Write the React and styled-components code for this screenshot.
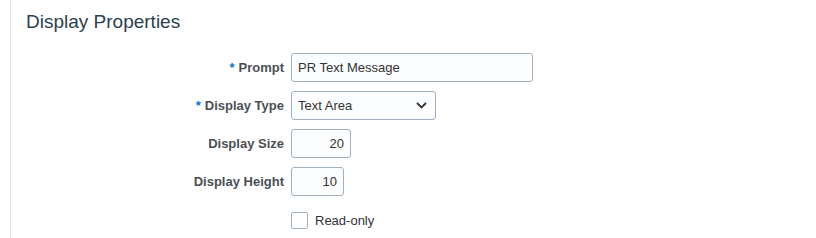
import React from "react";
import styled, { createGlobalStyle } from "styled-components";

const GlobalStyle = createGlobalStyle`
  html, body {
    margin: 0;
    padding: 0;
    background: #ffffff;
    font-family: "Liberation Sans", Arial, sans-serif;
  }
`;

const Page = styled.div`
  width: 816px;
  height: 238px;
  padding-left: 10px;
  box-sizing: border-box;
  overflow: hidden;
`;

const Panel = styled.section`
  border-left: 1px solid #dce3ea;
  height: 100%;
  padding: 10px 0 0 15px;
  box-sizing: border-box;
`;

const Title = styled.h2`
  margin: 0;
  font-size: 19px;
  font-weight: normal;
  color: #2b3f51;
  line-height: 24px;
`;

const Form = styled.div`
  display: grid;
  grid-template-columns: 258px auto;
  column-gap: 7px;
  row-gap: 9px;
  margin-top: 19px;
  align-items: center;
`;

const Label = styled.label`
  justify-self: end;
  font-size: 13px;
  font-weight: bold;
  color: #4b4f54;
  white-space: nowrap;
`;

const Star = styled.span`
  color: #0572ce;
  margin-right: 4px;
`;

const Field = styled.input`
  box-sizing: border-box;
  width: ${(p) => p.$w}px;
  height: 29px;
  border: 1px solid #a3b0bd;
  border-radius: 3px;
  background: #fcfdfe;
  font-family: "Liberation Sans", Arial, sans-serif;
  font-size: 13px;
  color: #333;
  padding: 0 6px;
  text-align: ${(p) => (p.$num ? "right" : "left")};
  outline: none;
`;

const SelectBox = styled.div`
  box-sizing: border-box;
  width: 145px;
  height: 29px;
  border: 1px solid #a3b0bd;
  border-radius: 3px;
  background: #fcfdfe;
  display: flex;
  align-items: center;
  justify-content: space-between;
  padding: 0 8px 0 6px;
  font-size: 13px;
  color: #333;
`;

const CheckRow = styled.div`
  grid-column: 2;
  display: flex;
  align-items: center;
  gap: 7px;
  margin-top: 7px;
  font-size: 13px;
  color: #333;
`;

const Box = styled.span`
  box-sizing: border-box;
  width: 17px;
  height: 17px;
  border: 1px solid #a3b0bd;
  border-radius: 2px;
  background: #fff;
`;

export default function App() {
  return (
    <>
      <GlobalStyle />
      <Page>
        <Panel>
          <Title>Display Properties</Title>
          <Form>
            <Label><Star>*</Star>Prompt</Label>
            <Field $w={242} defaultValue="PR Text Message" />
            <Label><Star>*</Star>Display Type</Label>
            <SelectBox>
              <span>Text Area</span>
              <svg width="11" height="7" viewBox="0 0 11 7">
                <path d="M1 1l4.5 4.5L10 1" fill="none" stroke="#333" strokeWidth="1.8" />
              </svg>
            </SelectBox>
            <Label>Display Size</Label>
            <Field $w={60} $num defaultValue="20" />
            <Label>Display Height</Label>
            <Field $w={53} $num defaultValue="10" />
            <CheckRow>
              <Box />
              <span>Read-only</span>
            </CheckRow>
          </Form>
        </Panel>
      </Page>
    </>
  );
}
